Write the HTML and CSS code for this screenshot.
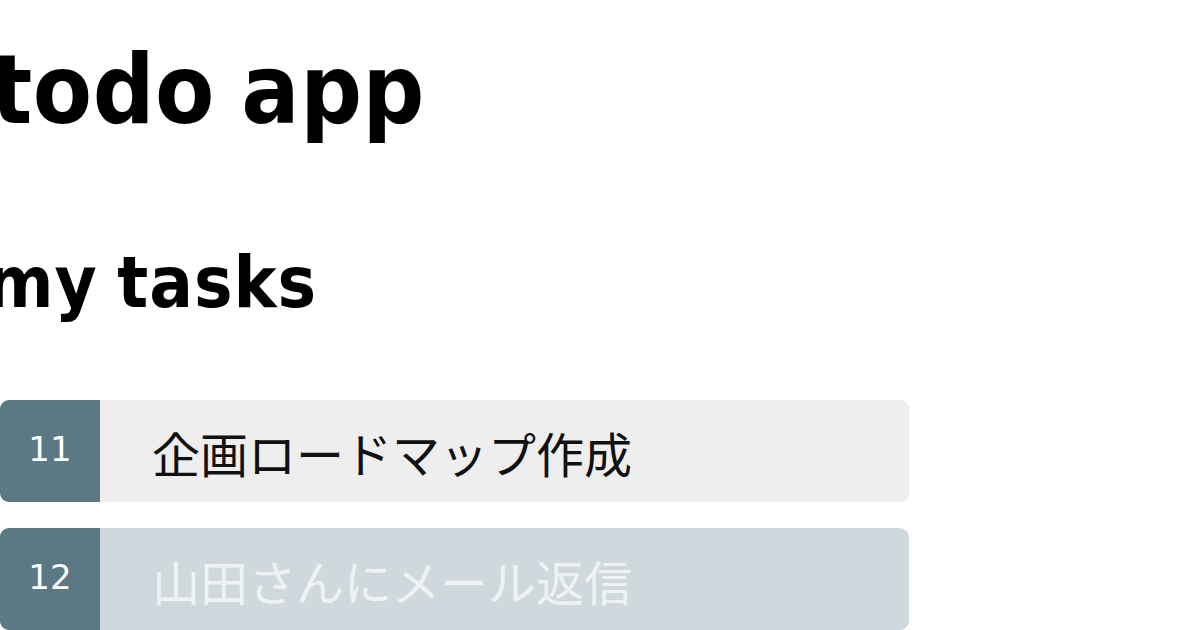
FILE: index.html
```html
<!DOCTYPE html>
<html lang="ja">
<head>
<meta charset="utf-8">
<title>todo app</title>
<link rel="stylesheet" href="styles.css">
</head>
<body>
<div class="page">
  <h1 class="title">todo app</h1>
  <h2 class="subtitle">my tasks</h2>
  <ul class="tasks">
    <li class="task">
      <span class="task-id">11</span>
      <span class="task-name">企画ロードマップ作成</span>
    </li>
    <li class="task task-done">
      <span class="task-id">12</span>
      <span class="task-name">山田さんにメール返信</span>
    </li>
  </ul>
</div>
</body>
</html>
```

FILE: styles.css
```css
html, body {
  margin: 0;
  padding: 0;
  background: #ffffff;
}
body {
  font-family: "DejaVu Sans", "Noto Sans CJK JP", sans-serif;
  color: #000000;
  overflow: hidden;
}
.page {
  width: 1200px;
  height: 630px;
  overflow: hidden;
}
.title,
.subtitle {
  font-family: "DejaVu Sans Condensed", "DejaVu Sans", sans-serif;
  font-stretch: condensed;
  font-weight: bold;
  word-spacing: -4px;
}
.title {
  font-size: 96px;
  line-height: 112px;
  margin: 34px 0 0 -9px;
  letter-spacing: 0.5px;
}
.subtitle {
  font-size: 72px;
  line-height: 84px;
  margin: 94px 0 0 -14px;
  letter-spacing: 1px;
}
.tasks {
  list-style: none;
  margin: 76px 0 0 0;
  padding: 0;
  width: 909px;
  display: flex;
  flex-direction: column;
  gap: 26px;
}
.task {
  display: flex;
  align-items: center;
  height: 102px;
  background: #eeeeee;
  border-radius: 9px;
  overflow: hidden;
}
.task-id {
  flex: 0 0 100px;
  align-self: stretch;
  display: flex;
  align-items: center;
  justify-content: center;
  padding-bottom: 4px;
  box-sizing: border-box;
  background: #5d7885;
  color: #ffffff;
  font-family: "DejaVu Sans", sans-serif;
  font-size: 34px;
}
.task-name {
  padding-left: 52px;
  padding-top: 2px;
  font-family: "Noto Sans CJK JP", sans-serif;
  font-size: 48px;
  color: #111111;
}
.task-done {
  background: #cfd8dc;
}
.task-done .task-name {
  color: #eef2f4;
}
```
